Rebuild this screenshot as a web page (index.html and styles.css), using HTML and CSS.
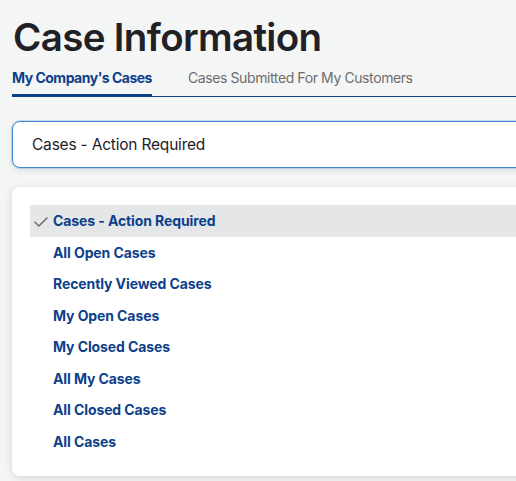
FILE: index.html
```html
<!DOCTYPE html>
<html lang="en">
<head>
<meta charset="utf-8">
<title>Case Information</title>
<link rel="stylesheet" href="styles.css">
</head>
<body>
<main class="page">
  <h1 class="title">Case Information</h1>
  <nav class="tabs">
    <a class="tab tab-active">My Company's Cases</a>
    <a class="tab">Cases Submitted For My Customers</a>
  </nav>
  <div class="select">Cases - Action Required</div>
  <ul class="menu">
    <li class="item item-selected">
      <svg class="check" viewBox="0 0 14 10" width="14" height="10"><path d="M1 5.2 L4.8 9 L13 1" fill="none" stroke="#6b6b6b" stroke-width="1.5" stroke-linecap="round" stroke-linejoin="round"/></svg>
      <span>Cases - Action Required</span>
    </li>
    <li class="item"><span>All Open Cases</span></li>
    <li class="item"><span>Recently Viewed Cases</span></li>
    <li class="item"><span>My Open Cases</span></li>
    <li class="item"><span>My Closed Cases</span></li>
    <li class="item"><span>All My Cases</span></li>
    <li class="item"><span>All Closed Cases</span></li>
    <li class="item"><span>All Cases</span></li>
  </ul>
</main>
</body>
</html>
```

FILE: styles.css
```css
* { box-sizing: border-box; }
html, body { margin: 0; padding: 0; }
body {
  background: #f4f5f5;
  font-family: Inter, "Noto Sans", "Liberation Sans", sans-serif;
  color: #1f2126;
  overflow: hidden;
  width: 516px;
  height: 481px;
}
.page {
  padding: 14px 0 0 12px;
  width: 560px;
}
.title {
  margin: 0 0 0 1px;
  font-size: 38.5px;
  font-weight: 600;
  line-height: 46px;
  letter-spacing: -0.65px;
  color: #1f2126;
}
.tabs {
  display: flex;
  gap: 36px;
  margin-top: 2px;
  border-bottom: 1px solid #0d3f8a;
}
.tab {
  font-size: 14px;
  line-height: 20px;
  padding: 6px 0 8px;
  color: #6d6d6f;
  letter-spacing: -0.4px;
}
.tab-active {
  font-weight: 700;
  color: #0d3f8a;
  box-shadow: inset 0 -3px 0 #0d3f8a;
  margin-bottom: -1px;
  padding-bottom: 9px;
  letter-spacing: -0.5px;
}
.select {
  margin-top: 24px;
  height: 47px;
  border: 1.5px solid #3f8ad3;
  border-radius: 8px;
  background: #fff;
  padding: 0 0 0 19px;
  display: flex;
  align-items: center;
  font-size: 15.5px;
  letter-spacing: -0.2px;
  color: #1f2126;
  box-shadow: 0 0 0 1px rgba(63,138,211,0.25), 0 3px 6px rgba(0,0,0,0.08);
}
.menu {
  list-style: none;
  margin: 19px 0 0;
  padding: 18px 0 19px 18px;
  background: #fff;
  border-radius: 8px;
  box-shadow: 0 2px 10px rgba(0,0,0,0.12);
  height: 289px;
}
.item {
  display: flex;
  align-items: center;
  height: 31.5px;
  padding-left: 23px;
  padding-bottom: 1px;
  font-size: 14px;
  font-weight: 700;
  letter-spacing: -0.1px;
  color: #0d3f8a;
}
.item-selected {
  background: #e4e6e8;
  padding-left: 4px;
  height: 32px;
}
.check {
  margin-right: 5px;
  margin-top: 2px;
}
```
